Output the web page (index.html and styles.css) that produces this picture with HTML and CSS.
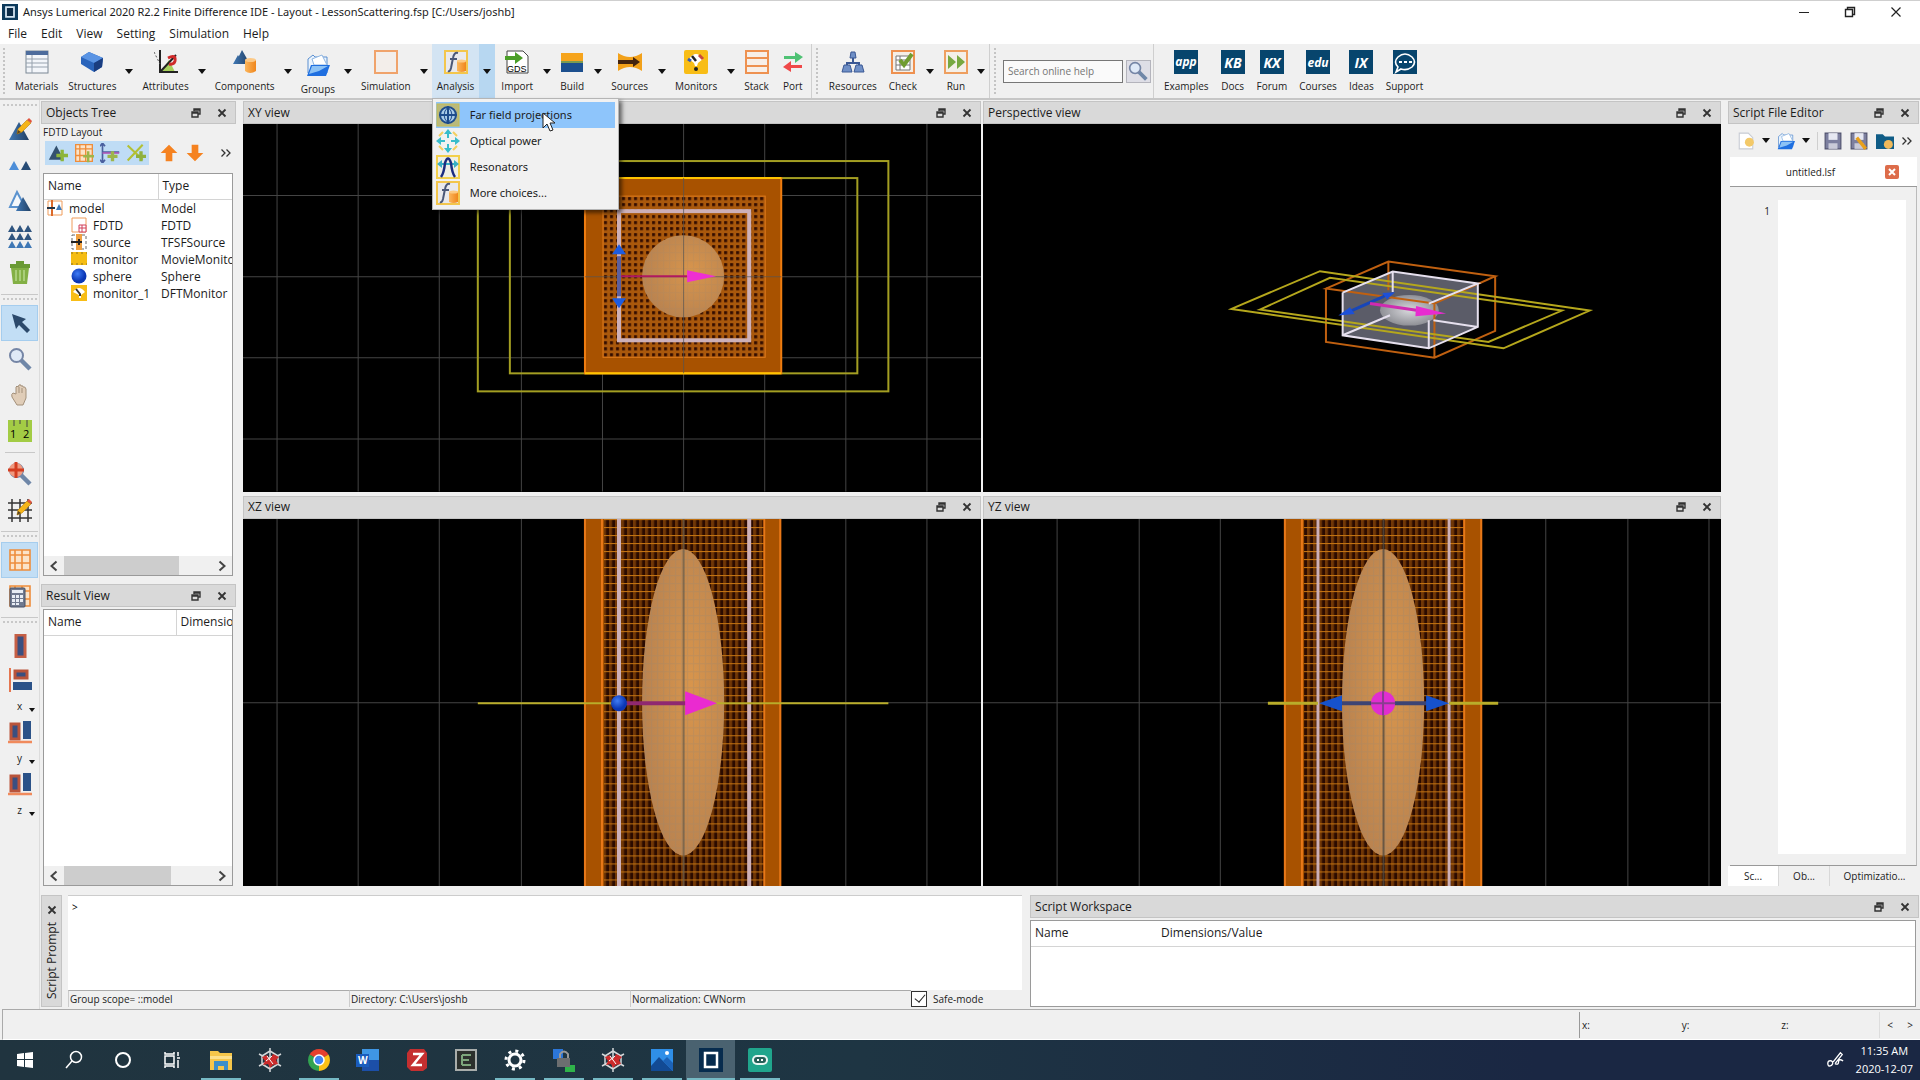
FILE: index.html
```html
<!DOCTYPE html>
<html lang="en">
<head>
  <meta charset="UTF-8" />
  <title>Ansys Lumerical 2020 R2.2 Finite Difference IDE</title>
  <link rel="stylesheet" href="styles.css">
</head>
<body>
  <!-- shared icons -->
  <svg class="defs" aria-hidden="true">
    <defs>
      <linearGradient id="gTri" x1="0" y1="0" x2="1" y2="0"><stop offset="0" stop-color="#3f78b5"/><stop offset="1" stop-color="#223f63"/></linearGradient>
      <linearGradient id="gOrange" x1="0" y1="0" x2="1" y2="0"><stop offset="0" stop-color="#fbb65c"/><stop offset="1" stop-color="#f0861c"/></linearGradient>
      <radialGradient id="gSphere" cx=".6" cy=".45" r=".6"><stop offset="0" stop-color="#d8954c"/><stop offset="1" stop-color="#b98350"/></radialGradient>
      <radialGradient id="gBall" cx=".4" cy=".35"><stop offset="0" stop-color="#3f7cf5"/><stop offset="1" stop-color="#0b37b5"/></radialGradient>
      <radialGradient id="gWhite" cx=".5" cy=".5"><stop offset="0" stop-color="#d8d8dc"/><stop offset="1" stop-color="#8f9096"/></radialGradient>
      <pattern id="mesh" width="6" height="6" patternUnits="userSpaceOnUse"><rect width="6" height="6" fill="#a9580c"/><rect x="1" y="1" width="3" height="3" fill="#320c00"/></pattern>
      <pattern id="meshTall" width="6" height="8" patternUnits="userSpaceOnUse"><rect width="6" height="8" fill="#2b0b00"/><rect width="3" height="8" fill="#713706"/><rect width="6" height="1" fill="#c47412"/></pattern>
      <pattern id="meshOver" width="6" height="8" patternUnits="userSpaceOnUse"><path d="M0 0h6M0 0v8" stroke="#9a8670" stroke-width="2" opacity=".6"/></pattern>

      <symbol id="restore" viewBox="0 0 12 12"><path d="M4 4V2h6v5H8M2 5h6v5H2zM2 6h6M4 3h6" fill="none" stroke="#333" stroke-width="1.4"/></symbol>
      <symbol id="close" viewBox="0 0 12 12"><path d="M2.500 2.500l7 7M9.500 2.500l-7 7" stroke="#333" stroke-width="1.8"/></symbol>
      <symbol id="chevron-left" viewBox="0 0 12 12"><path d="M8.500 1.500L3.500 6l5 4.500" fill="none" stroke="#444" stroke-width="2"/></symbol>
      <symbol id="chevron-right" viewBox="0 0 12 12"><path d="M3.500 1.500l5 4.500-5 4.500" fill="none" stroke="#444" stroke-width="2"/></symbol>
      <symbol id="more" viewBox="0 0 12 12"><path d="M1.500 2.500L5 6 1.500 9.500M6.500 2.500L10 6 6.500 9.500" fill="none" stroke="#333" stroke-width="1.300"/></symbol>
      <symbol id="fx" viewBox="0 0 24 24"><rect x="1" y="1" width="22" height="22" fill="#e9e9ec" stroke="#f3c64c" stroke-width="2"/><path d="M14 3q-4-1-5 5l-2 10q-1 4-3 3M6 9h7" fill="none" stroke="#4b5878" stroke-width="2"/><path d="M13 11v10q4 2 9 0V11q-5-2-9 0z" fill="url(#gOrange)"/><ellipse cx="17.500" cy="11" rx="4.500" ry="1.500" fill="#fdca82"/></symbol>
      <symbol id="folder" viewBox="0 0 24 24"><path d="M2 6l5-4 2 2h12v16H2z" fill="#eaf3fc" stroke="#5b8fd0"/><path d="M6 6l10-4 5 10H8z" fill="#fff" stroke="#8db5e2"/><path d="M1 23l4-11h19l-4 11z" fill="#1f6fe0"/><path d="M3 21l3-8h16l-9 5z" fill="#8cc2f5"/></symbol>
      <symbol id="pencil" viewBox="0 0 24 24"><path d="M9 17l1-5L19 3l4 3-9 9z" fill="#f5b51a" stroke="#b97d0a" stroke-width=".6"/><path d="M19 3l2-2 3 3-1 2z" fill="#e0553f"/><path d="M9 17l1-4 3 2z" fill="#5b4520"/></symbol>
      <symbol id="glass" viewBox="0 0 24 24"><path d="M13 13l9 9" stroke="#6f87a8" stroke-width="4.500"/><circle cx="8.500" cy="8.500" r="6.500" fill="#dfe9f7" stroke="#7585a5" stroke-width="2"/></symbol>
      <symbol id="frame" viewBox="0 0 24 24"><path d="M2 2h20v20H2zM2 7h20M2 15h20M7 2v20M14 2v20" fill="#fbe3c8" stroke="#ee8d3b" stroke-width="1.600"/></symbol>
      <symbol id="disk" viewBox="0 0 16 16"><path d="M1 1h14v14H1z" fill="#7c7f9f" stroke="#50526e"/><path d="M4 1h8v6H4z" fill="#e6e8f2"/><path d="M4 10h8v5H4z" fill="#c9cad8"/></symbol>
      <symbol id="align" viewBox="0 0 24 24"><path d="M3 4h8v15H3z" fill="#3a4f80" stroke="#b9543b" stroke-width="3"/><path d="M15 1h8v18h-8z" fill="#2b5288"/><path d="M0 22h24" stroke="#f08a5c" stroke-width="2.500"/></symbol>
      <symbol id="spider" viewBox="0 0 24 24"><path d="M12 0v24M1 6l22 12M23 6L1 18M12 3l8 5v8l-8 5-8-5V8z" fill="none" stroke="#d5d8da" stroke-width="1.500"/><path d="M4 9l5-2 3 4 3-5 6 3-3 3 2 4-5 1-3 3-2-4-5 1 2-4z" fill="#cc2b2b"/><path d="M9 8l6 8M8 13l6-5" stroke="#fff"/></symbol>
    </defs>
  </svg>

  <header class="titlebar">
    <svg class="app-icon" viewBox="0 0 18 18"><rect width="18" height="18" fill="#0d3a5c"/><path d="M4.500 3.500h9v11h-9z" fill="#0d2c48" stroke="#d6e6f2" stroke-width="2"/></svg>
    <h1>Ansys Lumerical 2020 R2.2 Finite Difference IDE - Layout - LessonScattering.fsp [C:/Users/joshb]</h1>
    <div class="window-buttons">
      <button aria-label="Minimize"><svg viewBox="0 0 12 12"><path d="M1 6.500h10" stroke="#222"/></svg></button>
      <button aria-label="Restore"><svg viewBox="0 0 12 12"><path d="M1.500 3.500h7v7h-7zM3.500 3.500v-2h7v7h-2" fill="none" stroke="#222" stroke-width="1.400"/></svg></button>
      <button aria-label="Close"><svg viewBox="0 0 12 12"><path d="M1.500 1.500l9 9M10.500 1.500l-9 9" stroke="#222" stroke-width="1.200"/></svg></button>
    </div>
  </header>
  <nav class="menubar">
    <button>File</button><button>Edit</button><button>View</button><button>Setting</button><button>Simulation</button><button>Help</button>
  </nav>

  <div class="toolbar">
    <span class="grip"></span>
    <button class="tool"><svg viewBox="0 0 24 24"><rect x="1" y="1" width="22" height="22" fill="#f3f6fa" stroke="#7b8794"/><path d="M1 1h22v4H1z" fill="#4d6c9c"/><path d="M1 9h22M1 13h22M1 17h22M7 5v18" stroke="#97a2ae"/></svg>Materials</button>
    <button class="tool"><svg viewBox="0 0 24 24"><path d="M1 7l8-5 14 6-1 9-8 5L1 14z" fill="#2a64bb"/><path d="M1 7l8-5 14 6-9 5z" fill="#5a94e4"/><path d="M14 13l9-5-1 9-8 5z" fill="#1a3d80"/></svg>Structures</button><button class="drop" aria-label="Structures menu"></button>
    <button class="tool"><svg viewBox="0 0 24 24"><path d="M7 22L21 22 15 10z" fill="#a6cf5b"/><path d="M6 0v22h18M6 22L22 5" fill="none" stroke="#222" stroke-width="2"/><path d="M14 8q8-4 7 3-1 4-6 3" fill="none" stroke="#cf2a2a" stroke-width="3"/><path d="M0 2l6 12" stroke="#555" stroke-dasharray="2"/></svg>Attributes</button><button class="drop" aria-label="Attributes menu"></button>
    <button class="tool"><svg viewBox="0 0 24 24"><path d="M9 0l8 14H2zM5 5l5 9H0z" fill="url(#gTri)"/><path d="M12 10v11q5 4 11 0V10z" fill="url(#gOrange)"/><ellipse cx="17.500" cy="10" rx="5.500" ry="2" fill="#fcc987"/></svg>Components</button><button class="drop" aria-label="Components menu"></button>
    <button class="tool low"><svg><use href="#folder"/></svg>Groups</button><button class="drop" aria-label="Groups menu"></button>
    <button class="tool"><svg viewBox="0 0 24 24"><rect x="1" y="1" width="22" height="22" fill="#f3eeea" stroke="#f0a36b" stroke-width="2"/></svg>Simulation</button><button class="drop" aria-label="Simulation menu"></button>
    <div class="dropdown">
      <button class="tool open"><svg><use href="#fx"/></svg>Analysis</button><button class="drop open" aria-label="Analysis menu"></button>
      <div class="menu">
        <button class="active"><svg viewBox="0 0 24 24"><rect x="1" y="1" width="22" height="22" fill="#b9b97c" stroke="#c9bd4f"/><circle cx="12" cy="12" r="8" fill="#a9cbe8" stroke="#1e4c8c" stroke-width="2"/><path d="M12 3v18M3 12h18" stroke="#1e4c8c" stroke-width="2"/><path d="M12 4q-8 8 0 16M12 4q8 8 0 16" fill="none" stroke="#1e4c8c"/></svg>Far field projections</button>
        <button><svg viewBox="0 0 24 24"><path d="M12 0l4 5h-3v4h-2V5H8zM12 24l4-5h-3v-4h-2v4H8zM0 12l5-4v3h4v2H5v3zM24 12l-5-4v3h-4v2h4v3z" fill="#38bccb"/><path d="M3 7l4-4M17 3l4 4M3 17l4 4M17 21l4-4" stroke="#f4cf5f" stroke-width="2"/></svg>Optical power</button>
        <button><svg viewBox="0 0 24 24"><rect x="1" y="1" width="22" height="22" fill="#efefe6" stroke="#f3d04c" stroke-width="2"/><path d="M1 9l5-4v3h12V5l5 4-5 4v-3H6v3z" fill="#38aec4"/><path d="M5 22Q8 18 9 8q3-9 6 0 1 10 4 14" fill="none" stroke="#1c2d80" stroke-width="2.500"/></svg>Resonators</button>
        <button><svg><use href="#fx"/></svg>More choices...</button>
        <svg class="cursor" viewBox="0 0 14 20"><path d="M1 1v15l4-4 3 7 3-1-3-7h5z" fill="#fff" stroke="#222"/></svg>
      </div>
    </div>
    <button class="tool"><svg viewBox="0 0 24 24"><path d="M2 1h16l5 5v17H2z" fill="#fff" stroke="#444"/><path d="M0 6h10V2l8 6-8 6v-4H0z" fill="#4b9e28"/><text x="2" y="22" class="gds">GDS</text></svg>Import</button><button class="drop" aria-label="Import menu"></button>
    <button class="tool"><svg viewBox="0 0 24 24"><path d="M1 3h22v10H1z" fill="#f6a41c"/><path d="M1 11h22v11H1z" fill="#1c4f8e"/><path d="M1 11h22v2H1z" fill="#7b9c50"/></svg>Build</button><button class="drop" aria-label="Build menu"></button>
    <button class="tool"><svg viewBox="0 0 24 24"><path d="M0 3q12 8 24 0v18q-12-8-24 0z" fill="#f2a11a"/><path d="M0 12h16" stroke="#43240f" stroke-width="4"/><path d="M15 7l7 5-7 5z" fill="#43240f"/></svg>Sources</button><button class="drop" aria-label="Sources menu"></button>
    <button class="tool"><svg viewBox="0 0 24 24"><rect width="24" height="24" rx="2" fill="#f8bd16"/><path d="M5 9q7-10 14 0l-5 4-1 3h-2l-1-3z" fill="#fff"/><path d="M8 6l4 5" stroke="#222" stroke-width="2.500"/><path d="M15 5l4 4" stroke="#c94a3c" stroke-width="3"/><path d="M4 9l3 2" stroke="#3a5bb0" stroke-width="3"/><circle cx="12" cy="19" r="2" fill="#222"/></svg>Monitors</button><button class="drop" aria-label="Monitors menu"></button>
    <button class="tool"><svg viewBox="0 0 24 24"><path d="M1 1h22v22H1zM1 8h22M1 16h22" fill="#f7efe8" stroke="#ee9150" stroke-width="2"/></svg>Stack</button>
    <button class="tool"><svg viewBox="0 0 24 24"><path d="M3 6h11V2l8 5-8 6V9H3z" fill="#4fc274"/><path d="M21 15H10v-4l-8 6 8 5v-4h11z" fill="#ef4848"/></svg>Port</button>
    <span class="rule"></span><span class="grip"></span>
    <button class="tool"><svg viewBox="0 0 24 24"><path d="M12 8v5M6 16v-3h12v3" fill="none" stroke="#3b5894" stroke-width="2"/><path d="M10 2h4l1 6H9zM3 15h6l2 7H1zM15 15h6l2 7H13z" fill="#6f8fc6" stroke="#3b5894"/></svg>Resources</button>
    <button class="tool"><svg viewBox="0 0 24 24"><rect x="1" y="1" width="22" height="22" fill="#f5eee6" stroke="#ee9150" stroke-width="2"/><path d="M5 6h14v14H5zM5 10h14M5 15h14M9 6v14" fill="#fff" stroke="#777"/><path d="M9 10l4 5 8-11" fill="none" stroke="#709c30" stroke-width="4"/></svg>Check</button><button class="drop" aria-label="Check menu"></button>
    <button class="tool"><svg viewBox="0 0 24 24"><rect x="1" y="1" width="22" height="22" fill="#f4efe8" stroke="#ee9f60" stroke-width="2"/><path d="M4 5l8 7-8 7zM13 5l8 7-8 7z" fill="#78a840"/></svg>Run</button><button class="drop" aria-label="Run menu"></button>
    <span class="rule"></span><span class="grip"></span>
    <form class="search">
      <input type="text" placeholder="Search online help" aria-label="Search online help">
      <button type="button" aria-label="Search"><svg><use href="#glass"/></svg></button>
    </form>
    <span class="rule"></span>
    <div class="links">
      <a href="#"><svg viewBox="0 0 24 24"><rect width="24" height="24" fill="#07456d"/><text x="12" y="16" class="badge small">app</text></svg>Examples</a>
      <a href="#"><svg viewBox="0 0 24 24"><rect width="24" height="24" fill="#07456d"/><text x="12" y="18" class="badge">KB</text></svg>Docs</a>
      <a href="#"><svg viewBox="0 0 24 24"><rect width="24" height="24" fill="#07456d"/><text x="12" y="18" class="badge">KX</text></svg>Forum</a>
      <a href="#"><svg viewBox="0 0 24 24"><rect width="24" height="24" fill="#07456d"/><text x="12" y="17" class="badge small">edu</text></svg>Courses</a>
      <a href="#"><svg viewBox="0 0 24 24"><rect width="24" height="24" fill="#07456d"/><text x="12" y="18" class="badge">IX</text></svg>Ideas</a>
      <a href="#"><svg viewBox="0 0 24 24"><rect width="24" height="24" fill="#07456d"/><path d="M5 17q-5-5 0-10 7-6 14 0 5 5 0 10-5 4-11 2l-5 3z" fill="none" stroke="#fff" stroke-width="1.600"/><path d="M6 12h3M11 12h3M16 12h3" stroke="#fff" stroke-width="2"/></svg>Support</a>
    </div>
  </div>

  <main>
    <aside class="sidebar">
      <span class="grip-h"></span>
      <button aria-label="Edit object"><svg viewBox="0 0 24 24"><path d="M11 5l10 18H1z" fill="url(#gTri)"/><use href="#pencil"/></svg></button>
      <button aria-label="Duplicate"><svg viewBox="0 0 24 24"><path d="M6 8l5 9H1z" fill="#4d8ed8"/><path d="M18 8l5 9H13z" fill="#274b75"/></svg></button>
      <button aria-label="Copy"><svg viewBox="0 0 24 24"><path d="M9 3l8 15H2z" fill="#f4f8fc" stroke="#5b93cf" stroke-width="2"/><path d="M15 8l8 14H8z" fill="url(#gTri)"/></svg></button>
      <button aria-label="Array"><svg viewBox="0 0 24 24"><path d="M4 0l4 7H0zM12 0l4 7H8zM20 0l4 7h-8zM4 8l4 7H0zM12 8l4 7H8zM20 8l4 7h-8z" fill="#2f5580"/><path d="M4 16l4 7H0zM12 16l4 7H8zM20 16l4 7h-8z" fill="#3f78b5"/></svg></button>
      <button aria-label="Delete"><svg viewBox="0 0 24 24"><path d="M3 7h18l-2 16H5z" fill="#83b045"/><path d="M2 3h20v4H2zM8 0h8v3H8z" fill="#6a9a34"/><path d="M8 9v11M12 9v11M16 9v11" stroke="#b7d88a" stroke-width="1.500"/></svg></button>
      <hr><span class="grip-h"></span>
      <button class="on" aria-label="Select"><svg viewBox="0 0 24 24"><path d="M4 3l14 5-4 3 8 8-3 3-8-8-3 4z" fill="#2c4a6c"/></svg></button>
      <button aria-label="Zoom"><svg><use href="#glass"/></svg></button>
      <button aria-label="Pan"><svg viewBox="0 0 24 24"><path d="M5 10l3 1V4q1-2 2 0l1-2q2-1 2 1 2-1 2 1 2-1 3 2v9l-3 7h-6l-5-8q-1-3 1-4z" fill="#e0cdb8" stroke="#a3907a"/><path d="M11 4v6M14 5v5" stroke="#a3907a"/></svg></button>
      <button aria-label="Measure"><svg viewBox="0 0 24 24"><rect width="24" height="22" y="1" fill="#a3cc45"/><path d="M6 1v6M12 1v4M19 1v7" stroke="#444"/><text x="2" y="19" class="ruler">1</text><text x="15" y="19" class="ruler">2</text></svg></button>
      <hr class="short">
      <button aria-label="Zoom extent"><svg viewBox="0 0 24 24"><use href="#glass"/><circle cx="8" cy="8" r="7" fill="#ef9a80"/><path d="M8 0v16M0 8h16" stroke="#d33d20" stroke-width="3"/></svg></button>
      <button aria-label="Edit grid"><svg viewBox="0 0 24 24"><path d="M4 1v23M12 1v23M20 1v23M0 5h24M0 12h24M0 20h24" stroke="#333" stroke-width="1.500"/><use href="#pencil"/></svg></button>
      <hr><span class="grip-h"></span>
      <button class="on" aria-label="View mesh"><svg><use href="#frame"/></svg></button>
      <button aria-label="Mesh calculator"><svg viewBox="0 0 24 24"><use href="#frame"/><rect x="2" y="4" width="15" height="19" rx="1" fill="#707a90" stroke="#475066"/><path d="M4 6h11v3H4zM4 11h3v3H4zM8 11h3v3H8zM12 11h3v3h-3zM4 15h3v3H4zM8 15h3v3H8zM12 15h3v3h-3zM4 19h3v2H4zM8 19h3v2H8z" fill="#e8edf5"/></svg></button>
      <hr><span class="grip-h"></span>
      <button aria-label="Resize"><svg viewBox="0 0 24 24"><path d="M8 1h9v22H8z" fill="#3a4f80" stroke="#c55f45" stroke-width="3"/></svg></button>
      <button class="axis" aria-label="Align x"><svg viewBox="0 0 24 24"><path d="M2 0v24" stroke="#e57650" stroke-width="2"/><path d="M7 3h12v7H7z" fill="#3a4f80" stroke="#b9543b" stroke-width="3"/><path d="M5 14h19v8H5z" fill="#2b5288"/></svg><span>x</span></button>
      <button class="axis" aria-label="Align y"><svg><use href="#align"/></svg><span>y</span></button>
      <button class="axis" aria-label="Align z"><svg><use href="#align"/></svg><span>z</span></button>
    </aside>

    <div class="docks">
      <div class="upper">
        <div class="left">
          <section class="dock tree">
            <div class="dock-title"><h2>Objects Tree</h2><button aria-label="Float"><svg><use href="#restore"/></svg></button><button aria-label="Close"><svg><use href="#close"/></svg></button></div>
            <p class="mode">FDTD Layout</p>
            <div class="tree-tools">
              <button class="on" aria-label="Show structures"><svg viewBox="0 0 24 24"><path d="M10 3l9 17H1z" fill="#33516f"/><path d="M17 8v14M10 15h14" stroke="#8db53a" stroke-width="4"/></svg></button>
              <button class="on" aria-label="Show simulation"><svg viewBox="0 0 24 24"><use href="#frame"/><path d="M17 10v13M11 16h13" stroke="#9db54a" stroke-width="3"/></svg></button>
              <button class="on" aria-label="Show sources"><svg viewBox="0 0 24 24"><path d="M3 1v22M3 11h20M0 4l3-4 3 4M0 20l3 4 3-4" fill="none" stroke="#4a5f9e" stroke-width="2"/><path d="M3 12h20" stroke="#b05cb8" stroke-width="2"/><path d="M15 10v12M9 16h12" stroke="#9db54a" stroke-width="4"/></svg></button>
              <button class="on" aria-label="Show monitors"><svg viewBox="0 0 24 24"><path d="M2 3l18 17M20 2L2 21" stroke="#b3c034" stroke-width="2.500"/><path d="M18 10v12M12 16h12" stroke="#8fb13e" stroke-width="4"/></svg></button>
              <button aria-label="Move up"><svg viewBox="0 0 24 24"><path d="M12 2l10 10h-6v10H8V12H2z" fill="#f58220"/></svg></button>
              <button aria-label="Move down"><svg viewBox="0 0 24 24"><path d="M12 22l10-10h-6V2H8v10H2z" fill="#f58220"/></svg></button>
              <button class="more" aria-label="More"><svg><use href="#more"/></svg></button>
            </div>
            <div class="list">
              <table>
                <colgroup><col class="col-name"><col></colgroup>
                <thead><tr><th>Name</th><th>Type</th></tr></thead>
                <tbody>
                  <tr><td><svg viewBox="0 0 16 16"><path d="M1 1h14v14H1z" fill="#fff" stroke="#ef9c5a"/><path d="M5 0v16" stroke="#dc6a2a" stroke-width="2"/><path d="M0 8h8" stroke="#234" stroke-width="2"/><path d="M12 4l3 6H9z" fill="#3f78b5"/></svg>model</td><td>Model</td></tr>
                  <tr class="child"><td><svg viewBox="0 0 16 16"><path d="M1 1h14v14H1z" fill="#fff" stroke="#ef9c5a"/><path d="M8 8h7v7H8zM8 11h7M11 8v7" fill="#fff" stroke="#d0405a"/></svg>FDTD</td><td>FDTD</td></tr>
                  <tr class="child"><td><svg viewBox="0 0 16 16"><path d="M1 1h14v14H1z" fill="#fff" stroke="#666" stroke-dasharray="3 2"/><path d="M5 0h6v16H5z" fill="#f0a040"/><path d="M0 8h11M8 5v6" stroke="#222" stroke-width="2"/></svg>source</td><td>TFSFSource</td></tr>
                  <tr class="child"><td><svg viewBox="0 0 16 16"><path d="M0 1h16v13H0z" fill="#f5bd14"/><path d="M0 2h16M0 13h16" stroke="#8a7020" stroke-dasharray="2 3"/></svg>monitor</td><td>MovieMonitor</td></tr>
                  <tr class="child"><td><svg viewBox="0 0 16 16"><circle cx="8" cy="8" r="7.500" fill="url(#gBall)"/></svg>sphere</td><td>Sphere</td></tr>
                  <tr class="child"><td><svg viewBox="0 0 16 16"><path d="M0 0h16v16H0z" fill="#f8bd16"/><path d="M2 7q6-8 12 0l-4 3v3H8v-3z" fill="#fff"/><path d="M5 4l4 5v2" fill="none" stroke="#333" stroke-width="2"/></svg>monitor_1</td><td>DFTMonitor</td></tr>
                </tbody>
              </table>
              <div class="scrollbar"><svg><use href="#chevron-left"/></svg><span class="track"><span class="thumb"></span></span><svg><use href="#chevron-right"/></svg></div>
            </div>
          </section>
          <section class="dock result">
            <div class="dock-title"><h2>Result View</h2><button aria-label="Float"><svg><use href="#restore"/></svg></button><button aria-label="Close"><svg><use href="#close"/></svg></button></div>
            <div class="list">
              <table>
                <colgroup><col class="col-result"><col></colgroup>
                <thead><tr><th>Name</th><th>Dimensions</th></tr></thead>
              </table>
              <div class="scrollbar"><svg><use href="#chevron-left"/></svg><span class="track"><span class="thumb"></span></span><svg><use href="#chevron-right"/></svg></div>
            </div>
          </section>
        </div>

        <div class="views">
          <section class="view">
            <div class="dock-title"><h2>XY view</h2><button aria-label="Float"><svg><use href="#restore"/></svg></button><button aria-label="Close"><svg><use href="#close"/></svg></button></div>
            <svg class="canvas" viewBox="0 0 738 367" preserveAspectRatio="xMidYMid slice">
              <path class="grid" d="M34.500 0v367M115.500 0v367M196.500 0v367M278.500 0v367M359.500 0v367M440.500 0v367M521.500 0v367M602.500 0v367M683.500 0v367M0 71.500h738M0 152.500h738M0 233.500h738M0 314.500h738"/>
              <rect class="yellow" x="235" y="37" width="410" height="230"/>
              <rect class="yellow" x="267" y="54" width="347" height="195"/>
              <rect x="342" y="54" width="196" height="195" fill="#a85200" stroke="#f07d10" stroke-width="2"/>
              <rect x="360" y="72" width="162" height="161" fill="url(#mesh)" stroke="#e07a1c"/>
              <path d="M342 54h196M342 249h196" stroke="#ffc400" stroke-width="2"/>
              <circle cx="440" cy="152" r="41" fill="url(#gSphere)"/><circle cx="440" cy="152" r="41" fill="url(#meshOver)" opacity=".3"/>
              <rect x="376" y="87" width="130" height="129" fill="none" stroke="#cdb0b8" stroke-width="4"/>
              <path d="M440.500 54v195M342 152.500h196" stroke="#555" opacity=".7"/>
              <path d="M376 132v40" stroke="#5c5f9e" stroke-width="4"/><path d="M376 120l7 10h-14zM376 184l7-10h-14z" fill="#1d5ce0"/>
              <path d="M378 152h66" stroke="#b01860" stroke-width="2"/><path d="M444 146l29 6-29 6z" fill="#ee2fd2"/>
            </svg>
          </section>
          <section class="view">
            <div class="dock-title"><h2>Perspective view</h2><button aria-label="Float"><svg><use href="#restore"/></svg></button><button aria-label="Close"><svg><use href="#close"/></svg></button></div>
            <svg class="canvas" viewBox="0 0 738 367" preserveAspectRatio="xMidYMid slice">
              <g transform="translate(217 116) scale(.3333)" fill="none" stroke-width="6">
                <path d="M428 157L578 94 833 130V260L686 324 428 285z" fill="#5b5c68"/>
                <ellipse cx="628" cy="210" rx="88" ry="46" fill="url(#gWhite)"/>
                <g stroke="#c06010"><path d="M378 145L565 64 885 108 703 190zM378 145V305L703 352 885 272V108M703 190V352M565 64V150"/></g>
                <g stroke="#b5a71c"><path d="M95 206L360 93 1168 211 910 324zM180 208L390 113 1085 211 865 305z"/></g>
                <g stroke="#e6e0ee"><path d="M428 157L578 94 833 130 686 190M428 157V285L686 324 833 260V130M686 240V324M578 94V155M428 285L570 225M700 240L833 260"/></g>
                <path d="M440 218L560 165" stroke="#1746b8" stroke-width="9"/><path d="M415 226l35-25 14 20zM585 156l-38 2 14 20z" fill="#1d50d8"/>
                <path d="M510 190L650 210" stroke="#d02bb0" stroke-width="9"/><path d="M648 197l90 23-92 8z" fill="#e82bd0"/>
              </g>
            </svg>
          </section>
          <section class="view">
            <div class="dock-title"><h2>XZ view</h2><button aria-label="Float"><svg><use href="#restore"/></svg></button><button aria-label="Close"><svg><use href="#close"/></svg></button></div>
            <svg class="canvas" viewBox="0 0 738 367" preserveAspectRatio="xMidYMid slice">
              <path class="grid" d="M34.500 0v367M115.500 0v367M196.500 0v367M278.500 0v367M602.500 0v367M683.500 0v367M0 183.500h738"/>
              <path d="M341 0h197v367H341z" fill="#a85200"/><path d="M342 0v367M359 0v367M521 0v367M537 0v367" stroke="#e87818" stroke-width="2"/>
              <path d="M361 0h159v367H361z" fill="url(#meshTall)"/>
              <ellipse cx="440" cy="183" rx="41" ry="153" fill="url(#gSphere)"/><ellipse cx="440" cy="183" rx="41" ry="153" fill="url(#meshOver)" opacity=".5"/>
              <path d="M440.500 0v367" stroke="#665c4c" stroke-width="2" opacity=".7"/>
              <path d="M376 0v367M506 0v367" stroke="#cdb0b8" stroke-width="4"/>
              <path d="M235 184h410" stroke="#b9ad2a" stroke-width="2"/>
              <path d="M376 184h68" stroke="#8f2870" stroke-width="4"/><path d="M442 172l32 12-32 12z" fill="#ea2ad0"/><circle cx="376" cy="184" r="8" fill="url(#gBall)"/>
            </svg>
          </section>
          <section class="view">
            <div class="dock-title"><h2>YZ view</h2><button aria-label="Float"><svg><use href="#restore"/></svg></button><button aria-label="Close"><svg><use href="#close"/></svg></button></div>
            <svg class="canvas" viewBox="0 0 738 367" preserveAspectRatio="xMidYMid slice">
              <path class="grid" d="M74.500 0v367M156.500 0v367M237.500 0v367M562.500 0v367M644.500 0v367M725.500 0v367M0 183.500h738"/>
              <path d="M301 0h198v367H301z" fill="#a85200"/><path d="M302 0v367M319 0v367M481 0v367M498 0v367" stroke="#e87818" stroke-width="2"/>
              <path d="M321 0h159v367H321z" fill="url(#meshTall)"/>
              <ellipse cx="400" cy="183" rx="41" ry="153" fill="url(#gSphere)"/><ellipse cx="400" cy="183" rx="41" ry="153" fill="url(#meshOver)" opacity=".5"/>
              <path d="M400.500 0v367" stroke="#554c42" stroke-width="2" opacity=".8"/>
              <path d="M335 0v367M466 0v367" stroke="#cdb0b8" stroke-width="3"/>
              <path d="M285 184h50M466 184h49" stroke="#b9ad2a" stroke-width="3"/>
              <path d="M350 184h100" stroke="#3d4474" stroke-width="4"/><path d="M336 184l23-8v16zM466 184l-23-8v16z" fill="#1652cc"/>
              <circle cx="400" cy="184" r="12" fill="#e02ed0"/><path d="M388 184h24M400 172v24" stroke="#8a3c90" stroke-width="2"/>
            </svg>
          </section>
        </div>

        <section class="dock editor">
          <div class="dock-title"><h2>Script File Editor</h2><button aria-label="Float"><svg><use href="#restore"/></svg></button><button aria-label="Close"><svg><use href="#close"/></svg></button></div>
          <div class="editor-tools">
            <button aria-label="New"><svg viewBox="0 0 16 16"><path d="M2 1h8l4 4v10H2z" fill="#fff" stroke="#c8ccd4"/><circle cx="11" cy="9" r="4" fill="#f3c969"/></svg></button><button class="drop" aria-label="New menu"></button>
            <button aria-label="Open"><svg><use href="#folder"/></svg></button><button class="drop" aria-label="Open menu"></button>
            <span class="rule"></span>
            <div class="save-tools">
              <button aria-label="Save"><svg><use href="#disk"/></svg></button>
              <button aria-label="Save as"><svg viewBox="0 0 16 16"><use href="#disk"/><path d="M6 5l8 10" stroke="#e8a01c" stroke-width="3"/></svg></button>
              <button aria-label="Working directory"><svg viewBox="0 0 16 16"><path d="M0 2h6l2 2h8v11H0z" fill="#0f5c86"/><circle cx="11" cy="11" r="4" fill="#f0b95a"/></svg></button>
            </div>
            <button class="more" aria-label="More"><svg><use href="#more"/></svg></button>
          </div>
          <div class="file-tab"><span>untitled.lsf</span><button aria-label="Close file"><svg viewBox="0 0 14 14"><rect width="14" height="14" rx="2" fill="#dd6c4a"/><path d="M4 4l6 6M10 4l-6 6" stroke="#fff" stroke-width="2"/></svg></button></div>
          <div class="code"><span class="line-no">1</span><textarea aria-label="Script"></textarea></div>
          <div class="bottom-tabs"><button class="current">Sc...</button><button>Ob...</button><button>Optimizatio...</button></div>
        </section>
      </div>

      <div class="lower">
        <section class="prompt">
          <div class="prompt-tab"><button aria-label="Close"><svg><use href="#close"/></svg></button><h2>Script Prompt</h2></div>
          <div class="prompt-body">
            <textarea aria-label="Script prompt">&gt;</textarea>
            <div class="prompt-status">
              <span>Group scope= ::model</span><span>Directory: C:\Users\joshb</span><span>Normalization: CWNorm</span>
              <label><input type="checkbox" checked>Safe-mode</label>
            </div>
          </div>
        </section>
        <section class="dock workspace">
          <div class="dock-title"><h2>Script Workspace</h2><button aria-label="Float"><svg><use href="#restore"/></svg></button><button aria-label="Close"><svg><use href="#close"/></svg></button></div>
          <div class="list">
            <table>
              <colgroup><col class="col-work"><col></colgroup>
              <thead><tr><th>Name</th><th>Dimensions/Value</th></tr></thead>
            </table>
          </div>
        </section>
      </div>
    </div>
  </main>

  <div class="statusbar">
    <div class="coords"><span>x:</span><span>y:</span><span>z:</span></div>
    <button>&lt;</button><button>&gt;</button>
  </div>

  <footer class="taskbar">
    <button aria-label="Start"><svg viewBox="0 0 24 24"><path d="M4 6l7-1v6H4zM12 5l8-1v7h-8zM4 12h7v7l-7-1zM12 12h8v8l-8-1z" fill="#fff"/></svg></button>
    <button aria-label="Search"><svg viewBox="0 0 24 24"><circle cx="14" cy="9" r="5.500" fill="none" stroke="#fff" stroke-width="1.500"/><path d="M10 13l-6 7" stroke="#fff" stroke-width="1.500"/></svg></button>
    <button aria-label="Cortana"><svg viewBox="0 0 24 24"><circle cx="12" cy="12" r="7" fill="none" stroke="#fff" stroke-width="2"/></svg></button>
    <button aria-label="Task view"><svg viewBox="0 0 24 24"><path d="M5 8h9v8H5zM5 4v2h9V4M5 20v-2h9v2M18 4v4M18 12v8M17 10h3" fill="none" stroke="#fff" stroke-width="1.500"/></svg></button>
    <button class="running" aria-label="File Explorer"><svg viewBox="0 0 24 24"><path d="M1 3h8l2 2h12v17H1z" fill="#f6c64a"/><path d="M1 8h22v3H1z" fill="#fde08c"/><path d="M5 22v-9h14v9h-4v-4H9v4z" fill="#3c8fc8"/></svg></button>
    <button aria-label="Mathematica"><svg><use href="#spider"/></svg></button>
    <button class="running" aria-label="Chrome"><svg viewBox="0 0 24 24"><path d="M12 12L2.500 6.500A11 11 0 0 1 21.500 6.500z" fill="#e5402f"/><path d="M12 12L21.500 6.500A11 11 0 0 1 12 23z" fill="#fbc116"/><path d="M12 12L12 23A11 11 0 0 1 2.500 6.500z" fill="#32a350"/><circle cx="12" cy="12" r="5" fill="#4285f4" stroke="#fff" stroke-width="1.500"/></svg></button>
    <button aria-label="Word"><svg viewBox="0 0 24 24"><path d="M6 1h17v22H6z" fill="#3f96e4"/><path d="M6 12h17v11H6z" fill="#1c4fa8"/><path d="M0 6h13v13H0z" fill="#1a5cbc"/><text x="2" y="16" class="word">W</text></svg></button>
    <button aria-label="Zotero"><svg viewBox="0 0 24 24"><path d="M5 1h14l3 4v15l-4 3H6l-4-4V5z" fill="#c52f30"/><path d="M8 6h9L8 17h9" fill="none" stroke="#fff" stroke-width="2.500"/></svg></button>
    <button aria-label="Terminal"><svg viewBox="0 0 24 24"><path d="M2 2h20v20H2z" fill="#2b302d" stroke="#a8adab" stroke-width="2"/><path d="M8 7h9M8 12h7M8 17h9M8 7v10" stroke="#7ca67c" stroke-width="2"/></svg></button>
    <button class="running" aria-label="Settings"><svg viewBox="0 0 24 24"><circle cx="12" cy="12" r="6" fill="none" stroke="#fff" stroke-width="3"/><circle cx="12" cy="12" r="9" fill="none" stroke="#fff" stroke-width="3" stroke-dasharray="3 4.070"/></svg></button>
    <button class="running" aria-label="VPN"><svg viewBox="0 0 24 24"><path d="M1 1h10v10H1z" fill="#2c76d8"/><path d="M13 17h10v7H13z" fill="#2fb34a"/><path d="M8 10V6q4-5 8 0v4" fill="none" stroke="#999" stroke-width="2"/><path d="M5 10h13v9H5z" fill="#6c6e70"/></svg></button>
    <button class="running" aria-label="Mathematica notebook"><svg><use href="#spider"/></svg></button>
    <button class="running" aria-label="Photos"><svg viewBox="0 0 24 24"><path d="M1 1h22v22H1z" fill="#2f8fe8"/><path d="M1 18l8-9 14 14H1z" fill="#124a94"/><path d="M13 13l4-4 6 6v8z" fill="#1c63b8"/><circle cx="17" cy="5" r="2" fill="#fff"/></svg></button>
    <button class="running current" aria-label="Lumerical"><svg viewBox="0 0 24 24"><rect width="24" height="24" fill="#072c4e"/><path d="M6 5h12v14H6z" fill="none" stroke="#fff" stroke-width="2.500"/></svg></button>
    <button class="running" aria-label="Screen recorder"><svg viewBox="0 0 24 24"><rect width="24" height="24" rx="2" fill="#20a58c"/><rect x="4" y="7" width="16" height="10" rx="5" fill="#e8f5f2"/><rect x="6" y="9" width="12" height="6" rx="3" fill="#255f58"/><path d="M9 12h2M13 12h2" stroke="#fff" stroke-width="2"/></svg></button>
    <div class="tray">
      <svg viewBox="0 0 20 20"><path d="M2 14q0-4 4-3 3 2 0 5-4 2-4-2zM8 12l8-10 2 2-8 10M10 14q4 2 4-2t5-1" fill="none" stroke="#fff" stroke-width="1.500"/></svg>
      <div class="clock"><span>11:35 AM</span><span>2020-12-07</span></div>
    </div>
  </footer>
</body>
</html>
```

FILE: styles.css
```css
* {
  box-sizing: border-box;
}
html, body {
  height: 100%;
}
body {
  margin: 0;
  display: flex;
  flex-direction: column;
  font-family: "Open Sans", "Noto Sans", sans-serif;
  font-size: 12px;
  line-height: 16px;
  color: #1c1c1c;
  background: #f0f0f0;
  border-top: 1px solid #cfcfcf;
}
button {
  font: inherit;
  color: inherit;
  background: none;
  border: 0;
  padding: 0;
}
h1, h2, p {
  margin: 0;
  font-size: 12px;
  font-weight: normal;
}
svg {
  display: block;
}
.defs {
  position: absolute;
  width: 0;
  height: 0;
}

/* title and menu */
.titlebar {
  display: flex;
  align-items: center;
  height: 22px;
  padding: 0 18px 0 2px;
  background: #fff;
}
.titlebar h1 {
  font-family: "Noto Sans", sans-serif;
  font-size: 11px;
}
.app-icon {
  width: 16px;
  height: 18px;
  margin-right: 5px;
}
.window-buttons {
  display: flex;
  gap: 34px;
  margin-left: auto;
}
.window-buttons svg {
  width: 12px;
  height: 12px;
}
.menubar {
  display: flex;
  gap: 14px;
  height: 21px;
  padding-left: 8px;
  background: #fff;
}

/* main toolbar */
.toolbar {
  display: flex;
  align-items: stretch;
  height: 56px;
  padding-left: 3px;
  font-size: 10px;
  line-height: 14px;
  border-bottom: 2px solid #c6c6c6;
}
.grip {
  width: 5px;
  margin: 4px 2px 4px 0;
  border-left: 2px dotted #c4c4c4;
}
.rule {
  width: 1px;
  margin-right: 4px;
  background: #cfcfcf;
}
.tool, .links a {
  display: flex;
  flex-direction: column;
  align-items: center;
  gap: 5px;
  padding: 6px 5px 0;
  color: inherit;
  text-decoration: none;
}
.dropdown ~ .tool, .links a {
  padding: 6px 6px 0;
}
.toolbar .low {
  padding-top: 9px;
}
.tool svg, .links svg {
  width: 24px;
  height: 24px;
}
.drop {
  display: flex;
  align-items: center;
  justify-content: center;
  width: 16px;
}
.dropdown ~ .drop {
  width: 15px;
}
.drop::before {
  content: "";
  border: 4px solid transparent;
  border-top: 5px solid #111;
  border-bottom: 0;
}
.gds {
  font: 9px "Liberation Sans", sans-serif;
}
.badge {
  font: italic bold 14px "Open Sans", sans-serif;
  fill: #fff;
  text-anchor: middle;
}
.badge.small {
  font-size: 12px;
}
.dropdown {
  position: relative;
  display: flex;
}
.tool.open {
  background: #d3e4f3;
}
.drop.open {
  background: #b7d7f1;
}
.menu {
  position: absolute;
  z-index: 2;
  top: 54px;
  left: 0;
  width: 187px;
  padding: 3px;
  font: 11px/16px "Noto Sans", sans-serif;
  background: #f1f1f1;
  border: 1px solid #b5b5b5;
  box-shadow: 3px 3px 4px #0008;
}
.menu button {
  display: flex;
  align-items: center;
  gap: 10px;
  width: 100%;
  height: 26px;
}
.menu .active {
  background: #8ec5fb;
}
.menu svg {
  width: 24px;
  height: 24px;
}
.menu .cursor {
  position: absolute;
  top: 13px;
  left: 109px;
  width: 14px;
  height: 20px;
}
.search {
  display: flex;
  align-items: center;
  gap: 3px;
  margin: 0 2px;
}
.search input {
  width: 120px;
  height: 23px;
  padding: 0 4px;
  font: inherit;
  background: #fafafa;
  border: 1px solid #777;
}
.search button {
  width: 25px;
  height: 23px;
  background: #dedee6;
  border: 1px solid #b4b4bc;
}
.search svg {
  width: 20px;
  height: 20px;
  margin: auto;
}
.links {
  display: flex;
}

/* left tool strip */
main {
  flex: 1;
  display: flex;
  min-height: 0;
}
.sidebar {
  display: flex;
  flex-direction: column;
  align-items: center;
  width: 40px;
  padding: 4px 1px 0;
  border-right: 1px solid #dcdcdc;
}
.sidebar button {
  display: grid;
  place-items: center;
  width: 37px;
  height: 36px;
}
.sidebar svg {
  width: 24px;
  height: 24px;
}
.sidebar .on {
  background: #c2def5;
  border: 1px solid #a5cdee;
}
.sidebar hr {
  width: 100%;
  margin: 3px 0;
  border: 0;
  border-top: 1px solid #c8c8c8;
}
.sidebar .short {
  width: 30px;
}
.grip-h {
  width: 34px;
  height: 4px;
  margin-bottom: 3px;
  border-top: 2px dotted #c8c8c8;
}
.sidebar .axis {
  height: 52px;
  font-size: 10px;
  line-height: 12px;
}
.axis span {
  position: relative;
}
.axis span::after {
  content: "";
  position: absolute;
  top: 8px;
  left: 12px;
  border: 3px solid transparent;
  border-top: 4px solid #111;
  border-bottom: 0;
}
.ruler {
  font: 11px "Open Sans", sans-serif;
}

/* docks */
.docks {
  flex: 1;
  display: flex;
  flex-direction: column;
  gap: 9px;
  min-width: 0;
  padding: 1px 1px 2px;
}
.upper {
  flex: 1;
  display: flex;
  gap: 7px;
  min-height: 0;
}
.left {
  display: flex;
  flex-direction: column;
  gap: 8px;
  width: 195px;
}
.dock {
  display: flex;
  flex-direction: column;
  min-width: 0;
}
.tree {
  flex: 475;
}
.result {
  flex: 302;
}
.dock-title {
  display: flex;
  align-items: center;
  flex: none;
  height: 23px;
  padding: 0 7px 0 4px;
  background: #d9d9d9;
  border: 1px solid #c4c4c4;
}
.dock-title h2 {
  flex: 1;
}
.dock-title button {
  margin-left: 14px;
}
.dock-title svg {
  width: 12px;
  height: 12px;
}
.mode {
  padding-left: 2px;
  font-size: 10px;
}
.tree-tools {
  display: flex;
  align-items: center;
  height: 26px;
  margin: 0 4px 5px;
}
.tree-tools button {
  display: grid;
  place-items: center;
  width: 26px;
  height: 24px;
}
.tree-tools svg {
  width: 20px;
  height: 20px;
}
.tree-tools .on {
  background: #bfdcf5;
}
.tree-tools .on + :not(.on) {
  margin-left: 7px;
}
.tree-tools .more, .editor-tools .more {
  width: 12px;
  margin-left: auto;
}
.more svg {
  width: 12px;
  height: 12px;
}
.list {
  flex: 1;
  display: flex;
  flex-direction: column;
  overflow: hidden;
  margin: 2px 3px 0 2px;
  background: #fff;
  border: 1px solid #9a9a9a;
}
table {
  width: 100%;
  table-layout: fixed;
  border-collapse: collapse;
}
.col-name {
  width: 114px;
}
.col-result {
  width: 132px;
}
.col-work {
  width: 126px;
}
th {
  height: 25px;
  padding: 0 4px;
  font-weight: normal;
  text-align: left;
  border-bottom: 1px solid #d4d4d4;
  white-space: nowrap;
  overflow: hidden;
}
th + th {
  border-left: 1px solid #d4d4d4;
}
.workspace th + th {
  border-left: 0;
}
td {
  height: 17px;
  padding: 0 0 0 3px;
  line-height: 17px;
  white-space: nowrap;
  overflow: hidden;
}
td svg {
  float: left;
  width: 16px;
  height: 16px;
  margin-right: 6px;
}
.child td:first-child {
  padding-left: 27px;
}
.scrollbar {
  display: flex;
  align-items: center;
  height: 19px;
  margin-top: auto;
  padding: 0 4px;
  background: #f0f0f0;
}
.scrollbar svg {
  width: 12px;
  height: 12px;
}
.track {
  flex: 1;
  height: 100%;
  margin: 0 4px;
}
.thumb {
  display: block;
  width: 78%;
  height: 100%;
  background: #cdcdcd;
}
.result .thumb {
  width: 72%;
}

/* views */
.views {
  flex: 1;
  display: grid;
  grid-template-columns: 1fr 1fr;
  grid-template-rows: minmax(0, 1fr) minmax(0, 1fr);
  gap: 4px 2px;
  min-width: 0;
}
.view {
  display: flex;
  flex-direction: column;
  min-width: 0;
}
.canvas {
  flex: 1;
  width: 100%;
  min-height: 0;
  background: #000;
}
.grid {
  stroke: #444;
}
.yellow {
  fill: none;
  stroke: #a39e22;
  stroke-width: 2;
}

/* script editor */
.editor {
  width: 191px;
}
.editor-tools {
  display: flex;
  align-items: center;
  height: 33px;
  padding: 0 6px 0 9px;
}
.editor-tools svg {
  width: 18px;
  height: 18px;
}
.editor-tools .more svg {
  width: 12px;
  height: 12px;
}
.editor-tools .drop {
  width: 22px;
}
.editor-tools .rule {
  height: 18px;
  margin: 0 6px 0 0;
}
.save-tools {
  display: flex;
  gap: 8px;
}
.file-tab {
  display: flex;
  align-items: center;
  height: 30px;
  margin: 0 2px;
  padding: 0 18px 0 6px;
  font-size: 10px;
  background: #fff;
  border-bottom: 1px solid #999;
}
.file-tab span {
  flex: 1;
  text-align: center;
}
.file-tab svg {
  width: 14px;
  height: 14px;
}
.code {
  flex: 1;
  display: flex;
  margin: 0 2px;
  padding: 13px 10px 11px 0;
  border-right: 1px solid #bbb;
  border-bottom: 1px solid #999;
}
.line-no {
  width: 48px;
  padding-right: 8px;
  font-size: 10px;
  line-height: 22px;
  text-align: right;
}
.code textarea {
  flex: 1;
  min-width: 0;
  border: 0;
  background: #fff;
  resize: none;
}
.bottom-tabs {
  display: flex;
  height: 20px;
  font-size: 10px;
}
.bottom-tabs button {
  width: 51px;
  border-right: 1px solid #d8d8d8;
}
.bottom-tabs .current {
  background: #fff;
}
.bottom-tabs button:last-child {
  flex: 1;
  border: 0;
}

/* script prompt and workspace */
.lower {
  display: flex;
  gap: 8px;
  height: 112px;
}
.prompt {
  flex: 980;
  display: flex;
  gap: 6px;
}
.prompt-tab {
  display: flex;
  flex-direction: column;
  align-items: center;
  gap: 6px;
  width: 21px;
  padding-top: 8px;
  background: #d9d9d9;
  border: 1px solid #c4c4c4;
}
.prompt-tab svg {
  width: 12px;
  height: 12px;
}
.prompt-tab h2 {
  writing-mode: vertical-rl;
  transform: rotate(180deg);
  white-space: nowrap;
}
.prompt-body {
  flex: 1;
  display: flex;
  flex-direction: column;
}
.prompt-body textarea {
  flex: 1;
  padding: 4px;
  font: 10px "Open Sans", sans-serif;
  background: #fff;
  border: 0;
  border-top: 1px solid #ccc;
  resize: none;
}
.prompt-status {
  display: flex;
  height: 17px;
  font-size: 10px;
  line-height: 16px;
}
.prompt-status span {
  width: 281px;
  padding-left: 1px;
  border-top: 1px solid #aaa;
  border-left: 1px solid #ccc;
}
.prompt-status label {
  display: flex;
  align-items: center;
  gap: 6px;
}
.prompt-status input {
  appearance: none;
  width: 16px;
  height: 16px;
  margin: 0;
  background: #fff;
  border: 1px solid #333;
}
.prompt-status input:checked::before {
  content: "";
  display: block;
  width: 5px;
  height: 9px;
  margin: 0 0 0 5px;
  border: solid #222;
  border-width: 0 1px 1px 0;
  transform: rotate(40deg);
}
.workspace {
  flex: 888;
}
.workspace .list {
  margin-left: 0;
}

/* status bar and taskbar */
.statusbar {
  display: flex;
  align-items: center;
  justify-content: flex-end;
  height: 31px;
  margin-left: 2px;
  font-size: 10px;
  border: 1px solid #aaa;
  border-right: 0;
  border-bottom-color: #fff;
}
.coords {
  display: flex;
  width: 301px;
  height: 26px;
  line-height: 26px;
  border-left: 1px solid #999;
  border-right: 1px solid #ddd;
}
.coords span {
  flex: 1;
  padding-left: 2px;
}
.statusbar button {
  width: 20px;
}
.taskbar {
  display: flex;
  align-items: center;
  height: 40px;
  background: linear-gradient(90deg, #20343f, #1e3543 45%, #1a2743 80%);
}
.taskbar button {
  display: grid;
  place-items: center;
  width: 49px;
  height: 40px;
}
.taskbar button svg {
  width: 24px;
  height: 24px;
}
.running {
  background: linear-gradient(#76b9c4, #76b9c4) center bottom / 40px 2px no-repeat;
}
.taskbar .current {
  background-color: #4a6270;
  background-size: 48px 2px;
}
.word {
  font: bold 10px "Open Sans", sans-serif;
  fill: #fff;
}
.tray {
  display: flex;
  align-items: center;
  gap: 12px;
  margin-left: auto;
  padding-right: 7px;
  color: #fff;
}
.tray svg {
  width: 18px;
  height: 18px;
}
.clock {
  display: flex;
  flex-direction: column;
  align-items: center;
  font-size: 11px;
  line-height: 18px;
}
```
